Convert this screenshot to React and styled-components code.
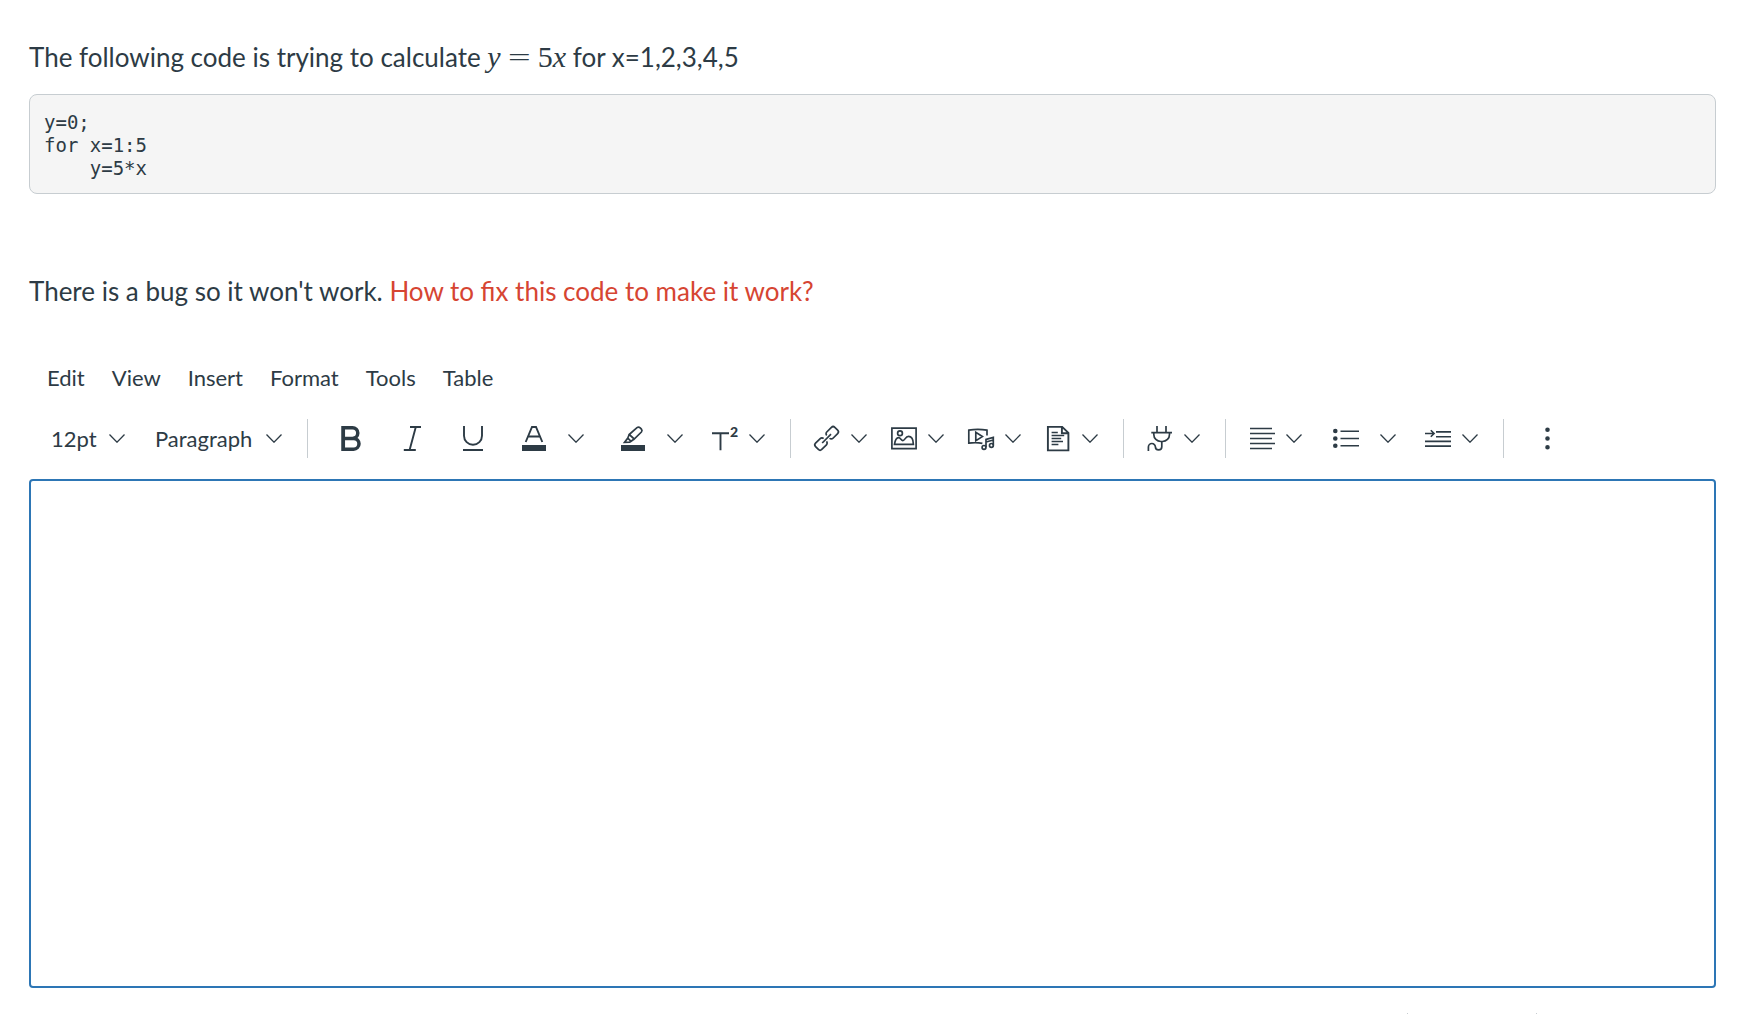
import { useState } from "react";
import styled, { createGlobalStyle } from "styled-components";

const ink = "#2d3b45";

const GlobalStyle = createGlobalStyle`
    * {
        box-sizing: border-box;
    }
    body {
        margin: 0;
        background: #ffffff;
        color: ${ink};
        font-family: Lato, "Liberation Sans", sans-serif;
    }
`

const Page = styled.main`
    display: flex;
    flex-direction: column;
    min-height: 100vh;
    padding: 37px 28px 0 29px;
`
const Prompt = styled.p`
    margin: 0;
    font-size: 26px;
    line-height: 40px;
`
const Question = styled.span`
    color: #d64532;
`
const Formula = styled.span`
    font-family: "Liberation Serif", serif;
    font-size: 30px;
    line-height: 1;
`
const Equals = styled.span`
    margin: 0 6px;
    font-family: "DejaVu Sans", sans-serif;
    font-weight: 200;
    line-height: 0;
`
const CodeBlock = styled.pre`
    margin: 17px 0 77px;
    padding: 16px 14px 13px;
    border: 1px solid #c7cdd1;
    border-radius: 8px;
    background: #f5f5f5;
    font-family: "DejaVu Sans Mono", monospace;
    font-size: 19px;
    line-height: 23px;
`
const Editor = styled.section`
    display: flex;
    flex: 1;
    flex-direction: column;
    margin-top: 49px;
`
const MenuBar = styled.nav`
    display: flex;
    gap: 1px;
    padding-left: 5px;
`
const MenuButton = styled.button`
    padding: 0 13px;
    border: 0;
    background: none;
    color: inherit;
    font: inherit;
    font-size: 22px;
    line-height: 36px;
`
const Toolbar = styled.div`
    display: flex;
    align-items: center;
    height: 83px;
    padding: 2px 0 0 22px;
`
const Divider = styled.span`
    flex: none;
    width: 1px;
    height: 39px;
    margin: 0 11px 0 13px;
    background: #c7cdd1;
`
const SelectBox = styled.div`
    display: grid;
    align-items: center;
    width: ${(props) => props.$width};
    margin-right: ${(props) => props.$after};

    > * {
        grid-area: 1 / 1;
    }
    > svg {
        justify-self: end;
        pointer-events: none;
    }
`
const Select = styled.select`
    width: 100%;
    padding: 0;
    border: 0;
    appearance: none;
    background: none;
    color: inherit;
    font: inherit;
    font-size: 22px;
    line-height: 36px;
`
const ToolButton = styled.button`
    display: flex;
    flex: none;
    align-items: center;
    gap: 11px;
    height: 39px;
    padding: ${(props) => (props.$toggle ? "0 16px 0 19px" : "0 12px")};
    border: 0;
    background: none;
    color: inherit;
`
const SplitArrow = styled(ToolButton)`
    padding: 0 17px 0 5px;
`
const Icon = styled.svg`
    display: block;
    flex: none;
    width: 26px;
    height: 26px;
    overflow: visible;
    fill: none;
    stroke: currentColor;
    stroke-width: 1.7;

    .solid {
        fill: currentColor;
        stroke: none;
    }
    text {
        font-family: Lato, sans-serif;
        font-size: 14px;
        font-weight: 900;
    }
`
const ChevronSvg = styled.svg`
    display: block;
    flex: none;
    width: 16px;
    height: 9px;
    fill: none;
    stroke: currentColor;
    stroke-width: 1.3;
`
const TextArea = styled.textarea`
    display: block;
    flex: 1;
    width: 100%;
    min-height: 200px;
    padding: 16px;
    border: 2px solid #2d76b5;
    border-radius: 4px;
    outline: 0;
    resize: none;
    color: inherit;
    font: inherit;
`
const StatusBar = styled.footer`
    display: flex;
    justify-content: flex-end;
    gap: 128px;
    padding: 25px 179px 0 0;
`
const StatusMark = styled.span`
    width: 1px;
    height: 1px;
    background: #c7cdd1;
`

const icons = {
    bold: <path strokeWidth="3.5" d="M5 1.8h9.5a5.3 5.3 0 0 1 0 10.6H5zM5 12.4h10.6a5.4 5.4 0 0 1 0 10.8H5zM5.3 0v25" />,
    italic: <path strokeWidth="1.9" d="M11 1h11M4.8 24h12M16.8 1 10.6 24" />,
    underline: <path strokeWidth="1.9" d="M4 0v9.7a9 9 0 0 0 18 0V0M3 24h20" />,
    color: (
        <>
            <path strokeWidth="1.9" d="M4.7 16 11 1h4l6.3 15M7.6 10.5h10.8" />
            <path className="solid" d="M1 19h24v6H1z" />
        </>
    ),
    highlight: (
        <>
            <path d="M9.2 8.5 17 1.6q1.6-1.2 3.2.2l1.2 1.3q1.2 1.4 0 2.9L14.2 13zM9.2 8.5 7.8 12l3.2 3.3 3.2-2.3M7.8 12l-3.3 4.4 5.2-.2 1.3-.9" />
            <path className="solid" d="M1 19h24v6H1z" />
        </>
    ),
    superscript: (
        <>
            <path strokeWidth="1.9" d="M0 7.2h17M8.5 7v17.2" />
            <text className="solid" x="18" y="11">2</text>
        </>
    ),
    link: (
        <>
            <path transform="translate(18.2 6.8) rotate(-45)" d="M-5.7-2a2.4 2.4 0 0 1 2.4-2.4h6.6A2.4 2.4 0 0 1 5.7-2v4a2.4 2.4 0 0 1-2.4 2.4h-6.6A2.4 2.4 0 0 1-5.7 2" />
            <path transform="translate(7 18) rotate(135)" d="M-5.7-2a2.4 2.4 0 0 1 2.4-2.4h6.6A2.4 2.4 0 0 1 5.7-2v4a2.4 2.4 0 0 1-2.4 2.4h-6.6A2.4 2.4 0 0 1-5.7 2" />
            <path d="m8.2 17 8.8-8.8" />
        </>
    ),
    image: (
        <>
            <path d="M.9 2.2h24.2v20.4H.9zM3.5 18.4c.6-4.2 2-6.8 4-6.8 2.2 0 2.6 3 4.4 3 2 0 2.4-4.2 5.6-4.2 3.3 0 4.8 4 4.9 8z" />
            <circle cx="9" cy="7.3" r="2.4" />
        </>
    ),
    media: (
        <>
            <path d="M19 9.6V4.2Q9.8 2.4.8 4.2v12.9q7-1.2 13.6.2M7.8 6.4v8.4l6.6-4.2z" />
            <path d="M18 21.2v-7.8l7.3-2v7.9M18 16l7.3-2" />
            <circle cx="16" cy="21.4" r="1.9" />
            <circle cx="23.4" cy="19.4" r="1.9" />
        </>
    ),
    document: (
        <>
            <path strokeWidth="1.9" d="M2.9.9h14.3l6.2 6v17.5H2.9zM16.9 1v6.2h6.4" />
            <path strokeWidth="1.3" d="M6.6 6.5h6.2M6.6 9.5h12.6M6.6 12.5h9.6M6.6 15.5H18M6.6 18.5h6.8" />
        </>
    ),
    plug: <path d="M10 0v6.5M19 0v6.5M4.3 6.7H25M6.8 6.7v1.8a7 7 0 0 0 7 7h1.7a7 7 0 0 0 7-7V6.7M14.8 15.5v5.2a3.2 3.2 0 0 1-6.4 0v.3a3.5 3.5 0 0 0-7 0v4" />,
    align: <path strokeWidth="1.6" d="M1 2.5h22M1 7.5h25M1 12.5h22M1 17.5h25M1 22.5h22" />,
    bullets: (
        <>
            <path strokeWidth="1.6" d="M7.5 5.3H26M7.5 12.5H26M7.5 19.8H26" />
            <path className="solid" d="M0 5a2.3 2.3 0 1 1 4.6 0A2.3 2.3 0 1 1 0 5M0 12.5a2.3 2.3 0 1 1 4.6 0 2.3 2.3 0 1 1-4.6 0M0 19.8a2.3 2.3 0 1 1 4.6 0 2.3 2.3 0 1 1-4.6 0" />
        </>
    ),
    indent: <path strokeWidth="1.6" d="M0 7.5h9M5.8 4.2 9.1 7.5l-3.3 3.3M11 5.9h15M11 10.7h15M0 15.4h26M0 20.1h26" />,
    more: <path className="solid" d="M11.2 3.7a2.3 2.3 0 1 1 4.6 0 2.3 2.3 0 1 1-4.6 0M11.2 12.5a2.3 2.3 0 1 1 4.6 0 2.3 2.3 0 1 1-4.6 0M11.2 21.3a2.3 2.3 0 1 1 4.6 0 2.3 2.3 0 1 1-4.6 0" />,
};

function Chevron() {
    return (
        <ChevronSvg viewBox="0 0 16 9" aria-hidden="true">
            <path d="M.5.5 8 8.2 15.5.5" />
        </ChevronSvg>
    );
}

function Tool({ name, label, toggle, menu }) {
    return (
        <ToolButton type="button" aria-label={label} $toggle={toggle}>
            <Icon viewBox="0 0 26 26" aria-hidden="true">{icons[name]}</Icon>
            {menu && <Chevron />}
        </ToolButton>
    );
}

function SplitTool({ name, label }) {
    return (
        <>
            <Tool name={name} label={label} toggle />
            <SplitArrow type="button" aria-label={`${label} options`}>
                <Chevron />
            </SplitArrow>
        </>
    );
}

function Dropdown({ label, options, width, after }) {
    return (
        <SelectBox $width={width} $after={after}>
            <Select aria-label={label}>
                {options.map((option) => <option key={option}>{option}</option>)}
            </Select>
            <Chevron />
        </SelectBox>
    );
}

const menus = ["Edit", "View", "Insert", "Format", "Tools", "Table"];

const code = `y=0;
for x=1:5
    y=5*x`;

export default function App() {
    const [answer, setAnswer] = useState("");

    return (
        <Page>
            <GlobalStyle />
            <Prompt>
                The following code is trying to calculate{" "}
                <Formula><i>y</i><Equals>=</Equals>5<i>x</i></Formula>
                {" "}for x=1,2,3,4,5
            </Prompt>
            <CodeBlock>{code}</CodeBlock>
            <Prompt>
                There is a bug so it won't work. <Question>How to fix this code to make it work?</Question>
            </Prompt>
            <Editor>
                <MenuBar aria-label="Editor menu">
                    {menus.map((menu) => <MenuButton key={menu} type="button">{menu}</MenuButton>)}
                </MenuBar>
                <Toolbar role="toolbar" aria-label="Formatting">
                    <Dropdown label="Font size" options={["12pt"]} width="74px" after="30px" />
                    <Dropdown label="Block style" options={["Paragraph"]} width="127px" after="12px" />
                    <Divider />
                    <Tool name="bold" label="Bold" toggle />
                    <Tool name="italic" label="Italic" toggle />
                    <Tool name="underline" label="Underline" toggle />
                    <SplitTool name="color" label="Text color" />
                    <SplitTool name="highlight" label="Background color" />
                    <Tool name="superscript" label="Superscript and subscript" menu />
                    <Divider />
                    <Tool name="link" label="Links" menu />
                    <Tool name="image" label="Images" menu />
                    <Tool name="media" label="Record or upload media" menu />
                    <Tool name="document" label="Documents" menu />
                    <Divider />
                    <Tool name="plug" label="Apps" menu />
                    <Divider />
                    <Tool name="align" label="Align" menu />
                    <SplitTool name="bullets" label="Bullet list" />
                    <Tool name="indent" label="Indent" menu />
                    <Divider />
                    <Tool name="more" label="More" toggle />
                </Toolbar>
                <TextArea
                    aria-label="Answer"
                    value={answer}
                    onChange={(event) => setAnswer(event.target.value)}
                />
            </Editor>
            <StatusBar>
                <StatusMark />
                <StatusMark />
            </StatusBar>
        </Page>
    );
}
